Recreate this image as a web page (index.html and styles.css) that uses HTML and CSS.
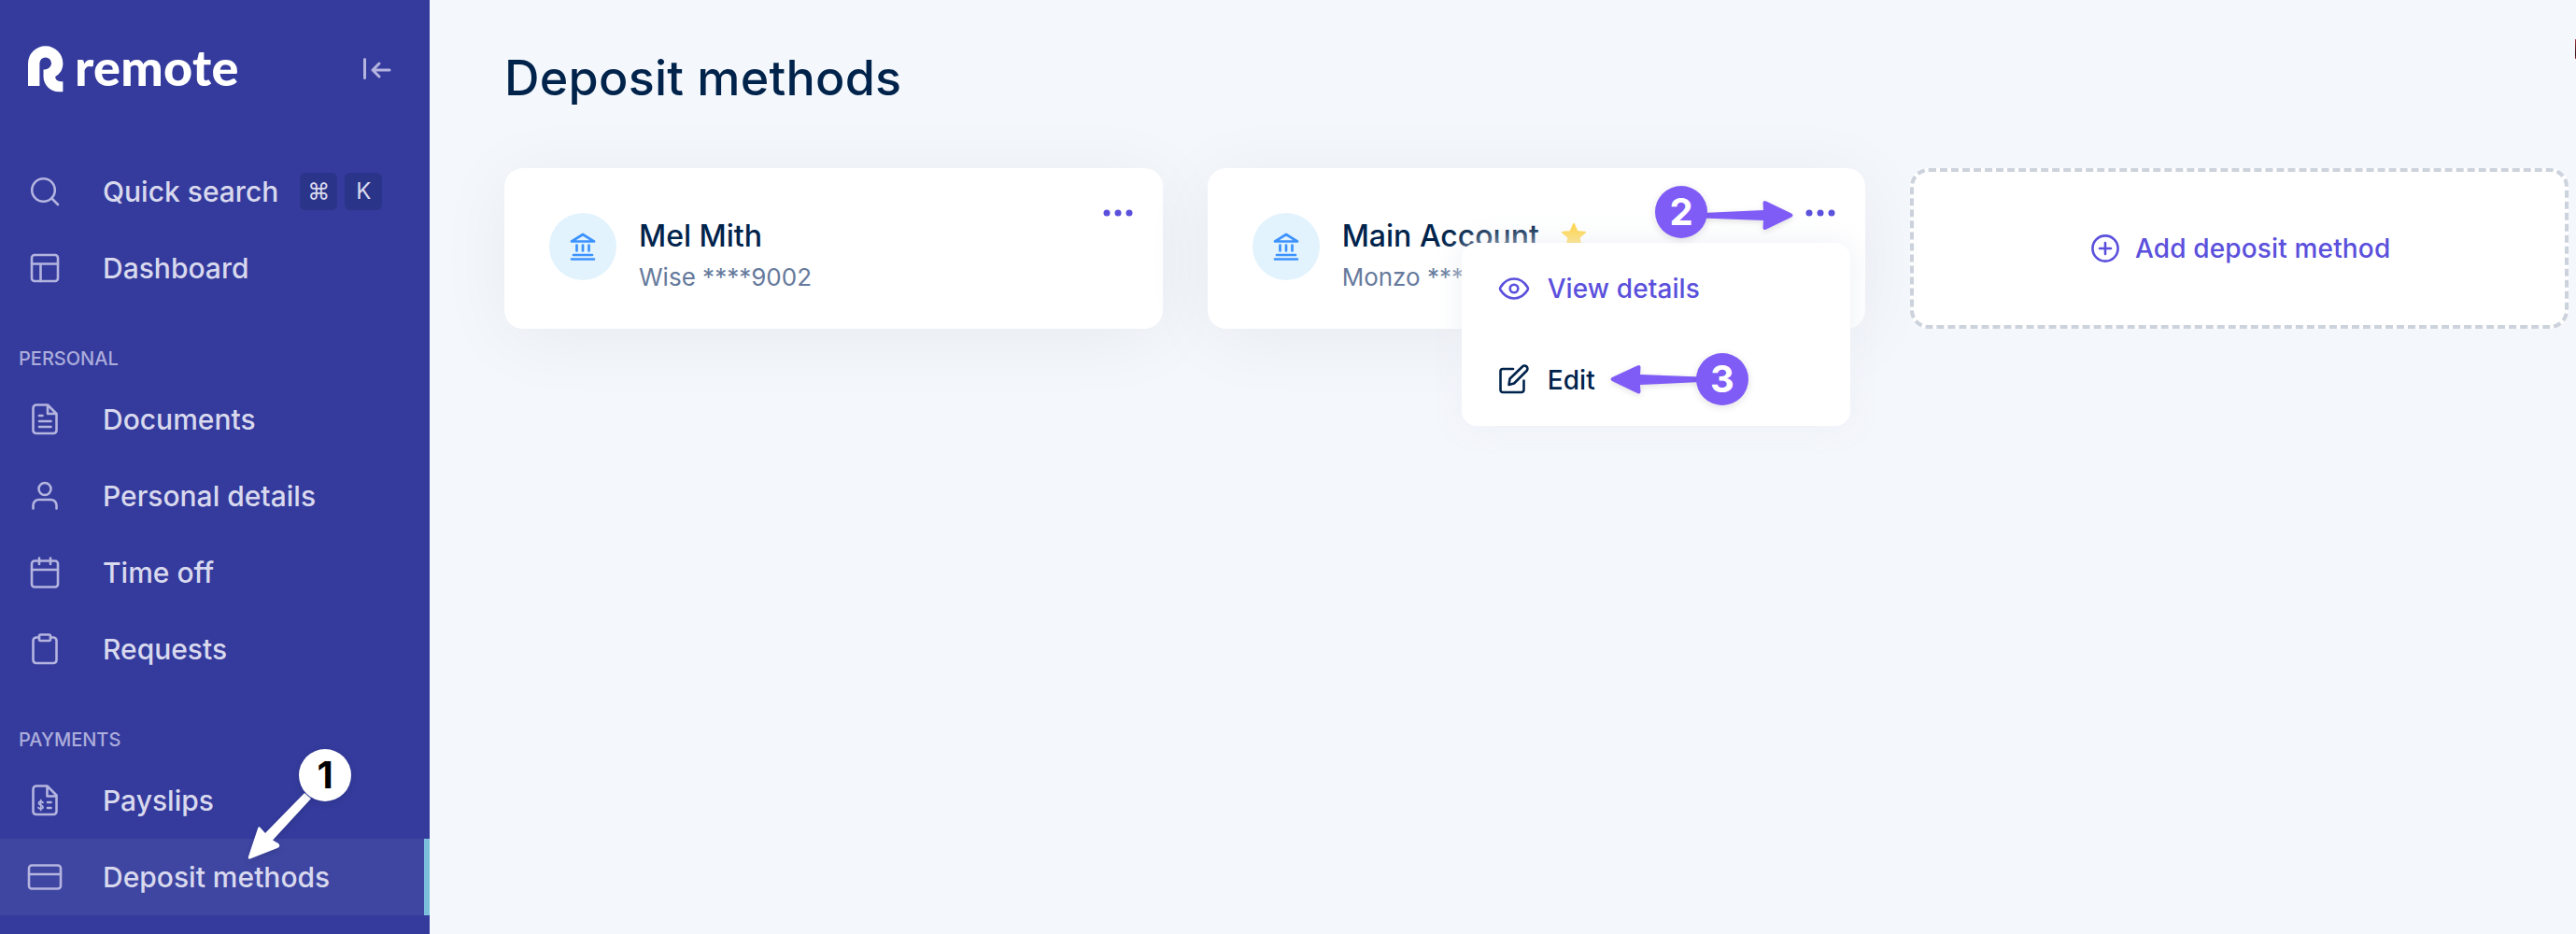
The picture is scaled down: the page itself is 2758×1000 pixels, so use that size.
FILE: index.html
```html
<!DOCTYPE html>
<html lang="en">
<head>
<meta charset="utf-8">
<title>Deposit methods</title>
<link rel="stylesheet" href="styles.css">
</head>
<body>
<div class="app">
  <aside class="sidebar">
    <header class="brand">
      <svg class="brand-mark" width="38" height="50" viewBox="0 0 38 50"><path d="M0 43V19A18.700 18.700 0 0 1 37.400 19C37.400 25 34.500 30 29.200 33C29.200 36 31.500 38.200 35 38.200H37.400V49.300H33C24 49.300 16.500 42 16.500 33V25.600C21.500 25.600 25 22.500 25 18.800A6.300 6.300 0 0 0 12.400 18.800V43Z" fill="#fff"/></svg>
      <span class="wordmark">remote</span>
      <svg class="collapse" width="32" height="26" viewBox="0 0 32 26"><path d="M2.500 2.500V22.500M29 14H11M18 7L11 14L18 21" /></svg>
    </header>
    <nav class="nav">
      <a class="item"><svg class="icon" viewBox="0 0 36 36"><circle cx="16.500" cy="16.500" r="12.300"/><path d="M25.500 25.500L32 32"/></svg><span>Quick search</span><kbd class="key cmd">⌘</kbd><kbd class="key">K</kbd></a>
      <a class="item"><svg class="icon" viewBox="0 0 36 36"><rect x="4" y="4" width="28" height="28" rx="3"/><path d="M4 13.500H32M13.500 13.500V32"/></svg><span>Dashboard</span></a>
      <h2 class="group">PERSONAL</h2>
      <a class="item"><svg class="icon" viewBox="0 0 36 36"><path d="M21 2.500H9A3.500 3.500 0 0 0 5.500 6V30A3.500 3.500 0 0 0 9 33H27A3.500 3.500 0 0 0 30.500 30V12ZM21 2.500V12H30.500M12 14H15.500M12 20H24.500M12 26H24.500"/></svg><span>Documents</span></a>
      <a class="item"><svg class="icon" viewBox="0 0 36 36"><circle cx="18" cy="10.500" r="6.500"/><path d="M5.500 31.500V28A6 6 0 0 1 11.500 22H24.500A6 6 0 0 1 30.500 28V31.500"/></svg><span>Personal details</span></a>
      <a class="item"><svg class="icon" viewBox="0 0 36 36"><rect x="4" y="5.500" width="28" height="28" rx="3"/><path d="M4 15H32M12 2.500V9M24 2.500V9"/></svg><span>Time off</span></a>
      <a class="item"><svg class="icon" viewBox="0 0 36 36"><path d="M12 5.500H9A3.500 3.500 0 0 0 5.500 9V30A3.500 3.500 0 0 0 9 33H27A3.500 3.500 0 0 0 30.500 30V9A3.500 3.500 0 0 0 27 5.500H24"/><rect x="12" y="2.500" width="12" height="6.500" rx="1.500"/></svg><span>Requests</span></a>
      <h2 class="group">PAYMENTS</h2>
      <a class="item"><svg class="icon" viewBox="0 0 36 36"><path d="M20.500 2.500H9A3.500 3.500 0 0 0 5.500 6V30A3.500 3.500 0 0 0 9 33H27A3.500 3.500 0 0 0 30.500 30V12.500ZM20.500 2.500V13.500H30.500M21 20H24.500M21 26H24.500"/><path class="fine" d="M16 20.500C15.500 18.500 11.500 18.500 11.500 21C11.500 23.500 16 22.500 16 25C16 27.500 11.500 27.500 11 25.500M13.700 17.500V28.500"/></svg><span>Payslips</span></a>
      <a class="item active"><svg class="icon" viewBox="0 0 36 36"><rect x="1" y="5.500" width="34" height="25" rx="3"/><path d="M1 15H35"/></svg><span>Deposit methods</span></a>
    </nav>
  </aside>
  <main class="content">
    <h1 class="title">Deposit methods</h1>
    <div class="cards">
      <section class="card">
        <span class="avatar"><svg width="30" height="32" viewBox="0 0 30 32"><path d="M3 10.500L15 3L27 10.500ZM8.500 14.500V20.500M15 14.500V20.500M21.500 14.500V20.500M5 25H25M3 29.500H27"/></svg></span>
        <div class="details"><h3 class="name">Mel Mith</h3><p class="account">Wise ****9002</p></div>
        <svg class="dots" width="32" height="8" viewBox="0 0 32 8"><circle cx="4" cy="4" r="3.500"/><circle cx="16" cy="4" r="3.500"/><circle cx="28" cy="4" r="3.500"/></svg>
      </section>
      <section class="card">
        <span class="avatar"><svg width="30" height="32" viewBox="0 0 30 32"><path d="M3 10.500L15 3L27 10.500ZM8.500 14.500V20.500M15 14.500V20.500M21.500 14.500V20.500M5 25H25M3 29.500H27"/></svg></span>
        <div class="details"><h3 class="name">Main Account <svg class="star" width="28" height="28" viewBox="0 0 28 28"><path d="M14 2L17.500 10L26 10.700L19.500 16.300L21.500 25L14 20.500L6.500 25L8.500 16.300L2 10.700L10.500 10Z"/></svg></h3><p class="account">Monzo ***</p></div>
        <svg class="dots" width="32" height="8" viewBox="0 0 32 8"><circle cx="4" cy="4" r="3.500"/><circle cx="16" cy="4" r="3.500"/><circle cx="28" cy="4" r="3.500"/></svg>
        <div class="menu">
          <a class="option view"><svg class="option-icon" viewBox="0 0 36 36"><path d="M3.500 19.500Q2.500 18 3.500 16.500C11 4.500 25 4.500 32.500 16.500Q33.500 18 32.500 19.500C25 31.500 11 31.500 3.500 19.500Z"/><circle cx="18" cy="18" r="4.300"/></svg>View details</a>
          <a class="option"><svg class="option-icon" viewBox="0 0 36 36"><path d="M17 6H6A2.500 2.500 0 0 0 3.500 8.500V28.500A2.500 2.500 0 0 0 6 31H26A2.500 2.500 0 0 0 28.500 28.500V18.500M12.500 23L13.500 16.500L27 3.500A3 3 0 0 1 31.500 8L18 21.500Z"/></svg>Edit</a>
        </div>
      </section>
      <button class="add"><svg width="36" height="36" viewBox="0 0 36 36"><circle cx="18" cy="18" r="13.600"/><path d="M18 12V24M12 18H24"/></svg>Add deposit method</button>
    </div>
  </main>
  <i class="edge"></i>
  <svg class="arrow a1" width="100" height="100" viewBox="0 0 100 100"><path d="M68 22L26 65L21 59.500Q19 57 18 60L8 90Q7 94 11 92L39 81Q43 79 40 76L34 72.500L75 28Z"/></svg>
  <span class="step s1">1</span>
  <svg class="arrow a2" width="100" height="40" viewBox="0 0 100 40"><path d="M0 18L65 15L64.500 7Q65 4 68 5.500L95 18.500Q98 20.500 95 22.500L68 35.500Q65 37 64.500 34L65 26L0 23.500Z"/></svg>
  <span class="step s2">2</span>
  <svg class="arrow a3" width="100" height="40" viewBox="0 0 100 40"><path d="M100 17.500L35 15L35.500 7Q35 4 32 5.500L5 18Q2 20 5 22L32 35Q35 36.500 35.500 33.500L35 26L100 23Z"/></svg>
  <span class="step s3">3</span>
</div>
</body>
</html>
```

FILE: styles.css
```css
* { box-sizing: border-box; }
body { margin: 0; font-family: Inter, sans-serif; color: #00234b; }
h1, h2, h3, p { margin: 0; }
.app { position: relative; display: flex; width: 2758px; height: 1000px; overflow: hidden; background: #f4f7fc; }
.sidebar { width: 460px; background: #343b9d; flex: none; }
.brand { display: flex; align-items: center; height: 164px; padding: 0 40px 16px 30px; }
.brand-mark { flex: none; }
.wordmark { margin: 0 0 4px 12px; font: 900 54px/60px Lato, sans-serif; letter-spacing: 0.3px; color: #fff; }
.collapse { margin-left: auto; stroke: #b4b4df; stroke-width: 3; fill: none; stroke-linecap: round; stroke-linejoin: round; }
.item { display: flex; align-items: center; height: 82px; padding-left: 30px; color: #d9d9ee; font-size: 30px; font-weight: 500; }
.item.active { background: #3e46a2; border-right: 6px solid #7bbfdb; }
.icon { width: 36px; height: 36px; margin-right: 44px; overflow: visible; fill: none; stroke: #b4b4df; stroke-width: 2.6; stroke-linecap: round; stroke-linejoin: round; }
.icon .fine { stroke-width: 1.7; }
.key { width: 40px; height: 40px; margin-left: 8px; border-radius: 6px; background: #2a3488; font: 400 24px/40px Inter, sans-serif; text-align: center; }
.cmd { margin-left: 23px; }
.group { height: 80px; padding: 42px 0 0 20px; font-size: 20px; line-height: 28px; font-weight: 500; color: #acaddb; }
.content { flex: 1; padding: 48px 8px 0 80px; }
.title { height: 132px; font-size: 52px; line-height: 71px; font-weight: 500; letter-spacing: 0.25px; }
.cards { display: grid; grid-template-columns: repeat(3, 1fr); gap: 48px; }
.card { position: relative; display: flex; height: 172px; padding: 48px; border-radius: 20px; background: #fff; box-shadow: 0 10px 80px rgba(0, 0, 0, .055); }
.avatar { display: flex; align-items: center; justify-content: center; width: 72px; height: 72px; border-radius: 50%; background: #e2f3fd; }
.avatar svg { fill: none; stroke: #3c92ff; stroke-width: 2.7; stroke-linecap: round; stroke-linejoin: round; }
.details { margin-left: 24px; }
.name { display: flex; align-items: center; height: 48px; font-size: 32px; font-weight: 500; }
.star { margin-left: 23px; fill: #ffd54a; stroke: #ffd54a; stroke-width: 2; stroke-linejoin: round; }
.account { font-size: 26px; line-height: 41px; color: #667a9c; }
.dots { margin: -4px -16px 0 auto; fill: #5b50dc; }
.menu { position: absolute; left: 272px; top: 80px; width: 416px; height: 196px; border-radius: 16px; background: #fff; box-shadow: 0 0 30px rgba(236, 238, 245, .9); z-index: 1; }
.option { display: flex; align-items: center; height: 98px; padding-left: 38px; font-size: 28px; font-weight: 500; letter-spacing: 0.1px; }
.option-icon { width: 36px; height: 36px; margin-right: 18px; fill: none; stroke: currentColor; stroke-width: 2.6; stroke-linecap: round; stroke-linejoin: round; }
.view, .add { color: #5b50dc; }
.add { display: flex; align-items: center; justify-content: center; gap: 14px; border: 4px dashed #cdd3dc; border-radius: 20px; background: #fff; font: 500 28px Inter, sans-serif; letter-spacing: 0.15px; }
.add svg { fill: none; stroke: #5b50dc; stroke-width: 2.6; stroke-linecap: round; }
.edge { position: absolute; left: 2757px; top: 42px; width: 1px; height: 21px; background: linear-gradient(#a8323a, #2a1015 80%, #a8323a); }
.step { position: absolute; z-index: 3; width: 56px; height: 56px; border-radius: 50%; background: #805cf7; color: #fff; text-align: center; font: 700 40px/56px Inter, sans-serif; box-shadow: 0 2px 8px rgba(0, 0, 0, .12); }
.arrow { position: absolute; z-index: 2; fill: #805cf7; filter: drop-shadow(0 2px 3px rgba(0, 0, 0, .12)); }
.s1 { left: 320px; top: 802px; background: #fff; color: #000; }
.a1 { left: 258px; top: 827px; fill: #fff; }
.s2 { left: 1772px; top: 199px; }
.a2 { left: 1823px; top: 210px; }
.s3 { left: 1816px; top: 378px; }
.a3 { left: 1721px; top: 386px; }
```
